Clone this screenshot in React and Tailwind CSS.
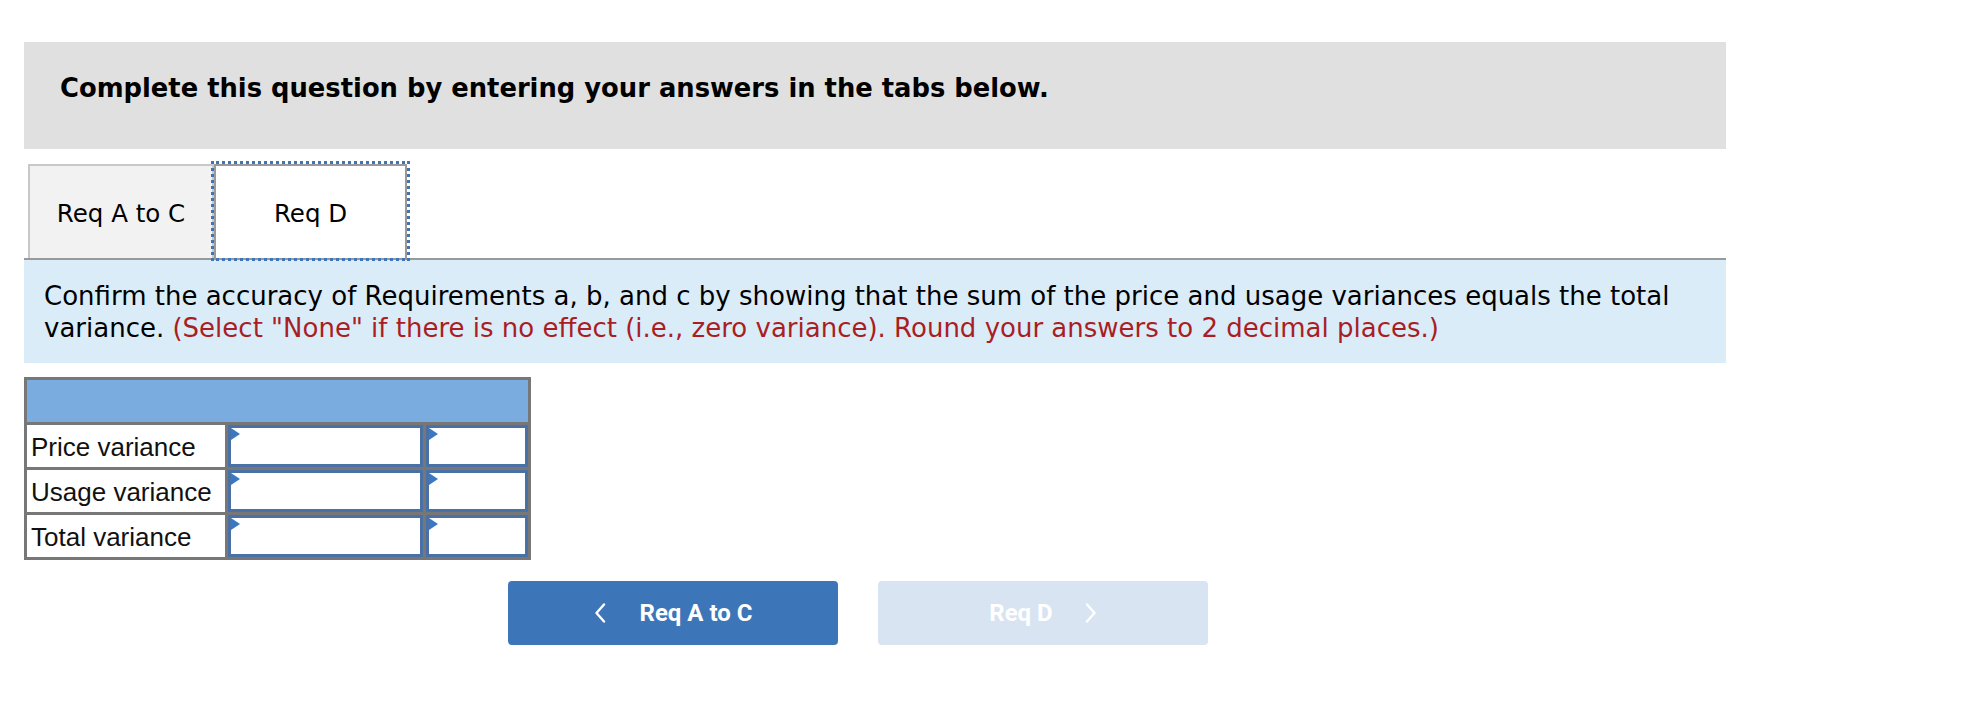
const rows = ["Price variance", "Usage variance", "Total variance"];

const Flag = () => (
  <span className="absolute left-0 top-0 h-0 w-0 border-y-[6px] border-l-[9px] border-y-transparent border-l-[#3b78c4]" />
);

const InputCell = () => (
  <div className="relative h-full w-full border-[3px] border-[#4a71a6] bg-white">
    <Flag />
  </div>
);

const Chevron = ({ dir }) => (
  <svg width="12" height="20" viewBox="0 0 12 20" fill="none" stroke="currentColor" strokeWidth="2.4" strokeLinecap="round" strokeLinejoin="round">
    {dir === "left" ? <path d="M10 1.5 L2.5 10 L10 18.5" /> : <path d="M2 1.5 L9.5 10 L2 18.5" />}
  </svg>
);

export default function App() {
  return (
    <div className="h-[704px] w-full bg-white font-['DejaVu_Sans',sans-serif] text-black">
      <div className="ml-[24px] w-[1702px] pt-[42px]">
        <div className="h-[107px] bg-[#e0e0e0] pl-[36px] pt-[31px]">
          <h2 className="text-[25.8px] font-bold leading-[30px]">Complete this question by entering your answers in the tabs below.</h2>
        </div>

        <div className="mt-[15px] flex h-[94px] items-end pl-[4px]">
          <div className="flex h-[94px] w-[186px] items-center justify-center border-x-2 border-t-2 border-[#c8c8c8] bg-[#f2f2f2] pt-[4px] text-[24.5px]">
            Req A to C
          </div>
          <div className="flex h-[94px] w-[193px] items-center justify-center border-x-2 border-t-2 border-[#9a9a9a] bg-white pt-[4px] text-[24.5px] outline-3 outline-dotted outline-[#3f74b5]">
            Req D
          </div>
        </div>
        <div className="h-[2px] bg-[#999999]" />

        <div className="h-[103px] bg-[#dbecf9] px-[20px] pt-[20px] text-[26px] leading-[32px]">
          <p>Confirm the accuracy of Requirements a, b, and c by showing that the sum of the price and usage variances equals the total</p>
          <p>
            <span>variance. </span>
            <span className="text-[#a91e23]">(Select "None" if there is no effect (i.e., zero variance). Round your answers to 2 decimal places.)</span>
          </p>
        </div>

        <div className="mt-[14px] grid w-[507px] grid-cols-[198px_195px_102px] gap-[3px] bg-[#777777] p-[3px] font-['Liberation_Sans',Arial,sans-serif]">
          <div className="col-span-3 h-[42px] bg-[#7aacdf]" />
          {rows.map((r) => (
            <div key={r} className="contents">
              <div className="flex h-[42px] items-end bg-white pb-[5px] pl-[4px] text-[26px] leading-[30px] text-[#111]">{r}</div>
              <InputCell />
              <InputCell />
            </div>
          ))}
        </div>

        <div className="ml-[484px] mt-[21px] flex gap-[40px] font-['Roboto',sans-serif] text-[24px] font-bold">
          <button className="flex h-[64px] w-[330px] items-center justify-center gap-[34px] rounded-[4px] bg-[#3c76b8] text-white">
            <Chevron dir="left" />
            <span>Req A to C</span>
          </button>
          <button className="flex h-[64px] w-[330px] items-center justify-center gap-[32px] rounded-[4px] bg-[#d8e4f1] text-white">
            <span>Req D</span>
            <Chevron dir="right" />
          </button>
        </div>
      </div>
    </div>
  );
}
